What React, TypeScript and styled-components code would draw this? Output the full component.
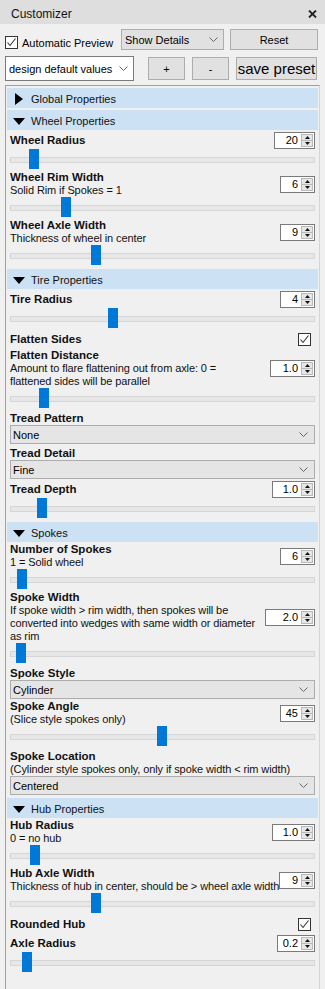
import React from 'react';
import styled, { createGlobalStyle } from 'styled-components';

const Global = createGlobalStyle`
  html, body { margin: 0; padding: 0; background: #f0f0f0; }
  body { font-family: "Liberation Sans", Arial, sans-serif; font-size: 11px; color: #000; }
  * { box-sizing: border-box; }
`;

const Window = styled.div`
  width: 325px;
  height: 989px;
  background: #f0f0f0;
  display: flex;
  flex-direction: column;
  overflow: hidden;
`;

const TitleBar = styled.div`
  height: 24px;
  padding: 4px 8px 0 11px;
  background: #dedede;
  display: flex;
  align-items: center;
  justify-content: space-between;
  font-size: 12px;
  color: #111;
`;

const Toolbar = styled.div`
  margin-top: 5px;
  height: 21px;
  padding-left: 5px;
  display: grid;
  grid-template-columns: 110px 103px 88px;
  column-gap: 6px;
  align-items: stretch;
`;

const PresetBar = styled.div`
  margin-top: 6px;
  height: 25px;
  padding-left: 5px;
  display: flex;
  align-items: center;
`;

const CheckGroup = styled.label`
  display: flex;
  align-items: center;
  gap: 4px;
  align-self: start;
  margin-top: 7px;
  white-space: nowrap;
`;

const Box = styled.span`
  width: 13px;
  height: 13px;
  flex-shrink: 0;
  border: 1px solid #333;
  background: #fff;
  display: inline-flex;
  align-items: center;
  justify-content: center;
`;

const Combo = styled.div<{ $white?: boolean; $w?: number }>`
  ${p => (p.$w ? `width: ${p.$w}px;` : '')}
  height: 100%;
  background: ${p => (p.$white ? '#fff' : '#e1e1e1')};
  border: 1px solid ${p => (p.$white ? '#7a7a7a' : '#adadad')};
  display: flex;
  align-items: center;
  justify-content: space-between;
  padding: 0 5px 0 3px;
  white-space: nowrap;
`;

const Button = styled.div<{ $w: number; $big?: boolean; $ml: number }>`
  width: ${p => p.$w}px;
  height: 23px;
  margin-left: ${p => p.$ml}px;
  background: #e1e1e1;
  border: 1px solid #adadad;
  display: flex;
  align-items: center;
  justify-content: center;
  font-size: ${p => (p.$big ? '15px' : '11px')};
`;

const ToolButton = styled.div`
  background: #e1e1e1;
  border: 1px solid #adadad;
  display: flex;
  align-items: center;
  justify-content: center;
`;

const Panel = styled.div`
  flex: 1;
  margin: 4px 5px 0 5px;
  border: 1px solid #a0a0a0;
  border-right-color: #d4d4d4;
  border-bottom: none;
  padding: 2px 4px 0 4px;
  display: flex;
  flex-direction: column;
`;

const GroupHeader = styled.div<{ $first?: boolean }>`
  margin: ${p => (p.$first ? '0' : '2px')} -3px 0;
  height: 20px;
  padding: 2px 0 0 4px;
  background: #cce1f4;
  display: flex;
  align-items: center;
  gap: 4px;
  font-size: 11px;
  color: #111;
`;

const Twisty = styled.span`
  width: 16px;
  display: flex;
  justify-content: center;
  align-items: center;
`;

const GroupBody = styled.div`
  padding-top: 1px;
  display: flex;
  flex-direction: column;
`;

const ParamRow = styled.div<{ $h?: number }>`
  display: flex;
  align-items: center;
  justify-content: space-between;
  min-height: ${p => p.$h ?? 18}px;
`;

const TextBlock = styled.div`
  display: flex;
  flex-direction: column;
  min-width: 0;
`;

const Label = styled.div`
  font-weight: bold;
  font-size: 11.5px;
  line-height: 13px;
  white-space: nowrap;
  color: #111;
`;

const Desc = styled.div`
  font-size: 11px;
  line-height: 13px;
  white-space: nowrap;
  letter-spacing: -0.1px;
  color: #111;
`;

const Spin = styled.div<{ $w: number }>`
  width: ${p => p.$w}px;
  height: 17px;
  flex-shrink: 0;
  background: #fff;
  border: 1px solid #7a7a7a;
  padding: 1px;
  display: flex;
  justify-content: flex-end;
  align-items: stretch;
`;

const SpinValue = styled.span`
  align-self: center;
  padding-right: 3px;
  font-size: 11px;
  line-height: 13px;
`;

const SpinArrows = styled.div`
  width: 12px;
  border: 1px solid #b9b9b9;
  background: #e6e6e6;
  display: flex;
  flex-direction: column;
`;

const Arrow = styled.div`
  flex: 1;
  display: flex;
  align-items: center;
  justify-content: center;
  & + & { border-top: 1px solid #b9b9b9; }
`;

const SliderTrack = styled.div`
  position: relative;
  height: 22px;
  &::before {
    content: '';
    position: absolute;
    left: 0;
    right: 0;
    top: 8px;
    height: 4px;
    background: #e7e7e7;
    border: 1px solid #d6d6d6;
  }
`;

const Handle = styled.div<{ $left: number }>`
  position: absolute;
  top: 0;
  left: ${p => p.$left}px;
  width: 10px;
  height: 20px;
  background: #0078d7;
`;

const SelectLabel = styled.div`
  display: flex;
  flex-direction: column;
  padding-top: 2px;
`;

const Select = styled.div`
  margin: 0 0 1px;
  height: 19px;
  background: #e5e5e5;
  border: 1px solid #adadad;
  display: flex;
  align-items: center;
  justify-content: space-between;
  padding: 0 6px 0 2px;
  font-size: 11px;
`;

const CheckSpot = styled.span`
  margin-right: 4px;
  display: flex;
`;

const Chevron = () => (
  <svg width="9" height="5" viewBox="0 0 9 5">
    <polyline points="0.5,0.5 4.5,4.5 8.5,0.5" fill="none" stroke="#666" strokeWidth="1" />
  </svg>
);

const Check = () => (
  <svg width="11" height="11" viewBox="0 0 11 11">
    <polyline points="1.5,5.5 4,8.5 9.5,1.5" fill="none" stroke="#333" strokeWidth="1.1" />
  </svg>
);

const CheckBox = () => (
  <Box>
    <Check />
  </Box>
);

const SpinBox = ({ value, w }: { value: string; w: number }) => (
  <Spin $w={w}>
    <SpinValue>{value}</SpinValue>
    <SpinArrows>
      <Arrow>
        <svg width="5" height="3" viewBox="0 0 5 3"><polygon points="0,3 2.5,0 5,3" fill="#111" /></svg>
      </Arrow>
      <Arrow>
        <svg width="5" height="3" viewBox="0 0 5 3"><polygon points="0,0 2.5,3 5,0" fill="#111" /></svg>
      </Arrow>
    </SpinArrows>
  </Spin>
);

type Param =
  | { kind: 'num'; label: string; desc?: string[]; value: string; w: number; handle: number }
  | { kind: 'check'; label: string }
  | { kind: 'select'; label: string; desc?: string[]; value: string };

type Group = { title: string; open: boolean; params: Param[] };

const groups: Group[] = [
  { title: 'Global Properties', open: false, params: [] },
  {
    title: 'Wheel Properties',
    open: true,
    params: [
      { kind: 'num', label: 'Wheel Radius', value: '20', w: 41, handle: 19 },
      { kind: 'num', label: 'Wheel Rim Width', desc: ['Solid Rim if Spokes = 1'], value: '6', w: 35, handle: 51 },
      { kind: 'num', label: 'Wheel Axle Width', desc: ['Thickness of wheel in center'], value: '9', w: 35, handle: 81 },
    ],
  },
  {
    title: 'Tire Properties',
    open: true,
    params: [
      { kind: 'num', label: 'Tire Radius', value: '4', w: 35, handle: 98 },
      { kind: 'check', label: 'Flatten Sides' },
      {
        kind: 'num',
        label: 'Flatten Distance',
        desc: ['Amount to flare flattening out from axle: 0 =', 'flattened sides will be parallel'],
        value: '1.0',
        w: 45,
        handle: 29,
      },
      { kind: 'select', label: 'Tread Pattern', value: 'None' },
      { kind: 'select', label: 'Tread Detail', value: 'Fine' },
      { kind: 'num', label: 'Tread Depth', value: '1.0', w: 43, handle: 27 },
    ],
  },
  {
    title: 'Spokes',
    open: true,
    params: [
      { kind: 'num', label: 'Number of Spokes', desc: ['1 = Solid wheel'], value: '6', w: 35, handle: 7 },
      {
        kind: 'num',
        label: 'Spoke Width',
        desc: [
          'If spoke width > rim width, then spokes will be',
          'converted into wedges with same width or diameter',
          'as rim',
        ],
        value: '2.0',
        w: 50,
        handle: 6,
      },
      { kind: 'select', label: 'Spoke Style', value: 'Cylinder' },
      { kind: 'num', label: 'Spoke Angle', desc: ['(Slice style spokes only)'], value: '45', w: 35, handle: 147 },
      {
        kind: 'select',
        label: 'Spoke Location',
        desc: ['(Cylinder style spokes only, only if spoke width < rim width)'],
        value: 'Centered',
      },
    ],
  },
  {
    title: 'Hub Properties',
    open: true,
    params: [
      { kind: 'num', label: 'Hub Radius', desc: ['0 = no hub'], value: '1.0', w: 43, handle: 20 },
      {
        kind: 'num',
        label: 'Hub Axle Width',
        desc: ['Thickness of hub in center, should be > wheel axle width'],
        value: '9',
        w: 36,
        handle: 81,
      },
      { kind: 'check', label: 'Rounded Hub' },
      { kind: 'num', label: 'Axle Radius', value: '0.2', w: 38, handle: 12 },
    ],
  },
];

const ParamView = ({ p }: { p: Param }) => {
  if (p.kind === 'check') {
    return (
      <ParamRow $h={19}>
        <Label>{p.label}</Label>
        <CheckSpot>
          <CheckBox />
        </CheckSpot>
      </ParamRow>
    );
  }
  if (p.kind === 'select') {
    return (
      <>
        <SelectLabel>
          <Label>{p.label}</Label>
          {p.desc?.map(d => <Desc key={d}>{d}</Desc>)}
        </SelectLabel>
        <Select>
          <span>{p.value}</span>
          <Chevron />
        </Select>
      </>
    );
  }
  return (
    <>
      <ParamRow>
        <TextBlock>
          <Label>{p.label}</Label>
          {p.desc?.map(d => <Desc key={d}>{d}</Desc>)}
        </TextBlock>
        <SpinBox value={p.value} w={p.w} />
      </ParamRow>
      <SliderTrack>
        <Handle $left={p.handle} />
      </SliderTrack>
    </>
  );
};

export default function App() {
  return (
    <Window>
      <Global />
      <TitleBar>
        <span>Customizer</span>
        <svg width="9" height="8" viewBox="0 0 9 8">
          <path d="M1 0.5 L8 7.5 M8 0.5 L1 7.5" stroke="#222" strokeWidth="1.8" />
        </svg>
      </TitleBar>
      <Toolbar>
        <CheckGroup>
          <CheckBox />
          <span>Automatic Preview</span>
        </CheckGroup>
        <Combo>
          <span>Show Details</span>
          <Chevron />
        </Combo>
        <ToolButton>Reset</ToolButton>
      </Toolbar>
      <PresetBar>
        <Combo $white $w={129}>
          <span>design default values</span>
          <Chevron />
        </Combo>
        <Button $w={37} $ml={14}>+</Button>
        <Button $w={37} $ml={7}>-</Button>
        <Button $w={81} $ml={7} $big>save preset</Button>
      </PresetBar>
      <Panel>
        {groups.map((g, i) => (
          <React.Fragment key={g.title}>
            <GroupHeader $first={i === 0}>
              <Twisty>
                {g.open ? (
                  <svg width="12" height="7" viewBox="0 0 12 7"><polygon points="0,0 12,0 6,7" fill="#000" /></svg>
                ) : (
                  <svg width="8" height="12" viewBox="0 0 8 12"><polygon points="0,0 8,6 0,12" fill="#000" /></svg>
                )}
              </Twisty>
              <span>{g.title}</span>
            </GroupHeader>
            {g.open && (
              <GroupBody>
                {g.params.map(p => (
                  <ParamView key={p.label} p={p} />
                ))}
              </GroupBody>
            )}
          </React.Fragment>
        ))}
      </Panel>
    </Window>
  );
}
